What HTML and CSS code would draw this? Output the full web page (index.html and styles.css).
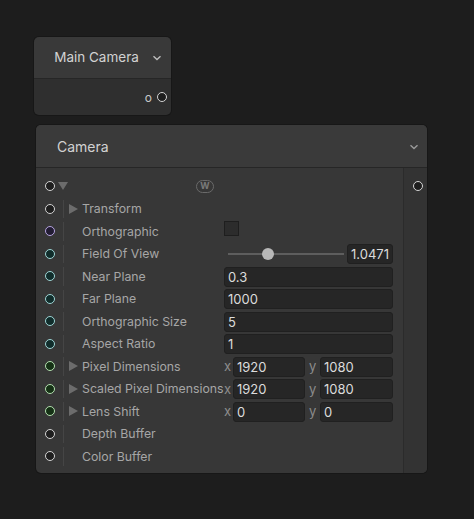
FILE: index.html
```html
<!DOCTYPE html>
<html>
<head>
<meta charset="utf-8">
<link rel="stylesheet" href="styles.css">
</head>
<body>
<div class="canvas">
  <div class="node small">
    <div class="head small-head">
      <span class="title">Main Camera</span>
      <svg class="chev" width="10" height="6" viewBox="0 0 10 6"><path d="M1.5 1.2 L5 4.5 L8.5 1.2" fill="none" stroke="#bdbdbd" stroke-width="1.4"/></svg>
    </div>
    <div class="small-body">
      <span class="o">o</span><span class="port p-white"></span>
    </div>
  </div>

  <div class="node big">
    <div class="head big-head">
      <span class="title">Camera</span>
      <svg class="chev" width="10" height="6" viewBox="0 0 10 6"><path d="M1.5 1.2 L5 4.5 L8.5 1.2" fill="none" stroke="#9a9a9a" stroke-width="1.4"/></svg>
    </div>
    <div class="big-body">
      <div class="inputs">
        <div class="row">
          <span class="port p-white"></span>
          <span class="tri-down"></span>
          <span class="wbadge">W</span>
        </div>
        <div class="row">
          <span class="port p-white"></span><span class="guide"></span><span class="tri"></span>
          <span class="label">Transform</span>
        </div>
        <div class="row">
          <span class="port p-purple"></span><span class="guide"></span>
          <span class="label">Orthographic</span>
          <span class="check"></span>
        </div>
        <div class="row">
          <span class="port p-cyan"></span><span class="guide"></span>
          <span class="label">Field Of View</span>
          <div class="slider"><div class="track"><span class="knob"></span></div><span class="field fov">1.0471</span></div>
        </div>
        <div class="row">
          <span class="port p-cyan"></span><span class="guide"></span>
          <span class="label">Near Plane</span>
          <span class="field wide">0.3</span>
        </div>
        <div class="row">
          <span class="port p-cyan"></span><span class="guide"></span>
          <span class="label">Far Plane</span>
          <span class="field wide">1000</span>
        </div>
        <div class="row">
          <span class="port p-cyan"></span><span class="guide"></span>
          <span class="label">Orthographic Size</span>
          <span class="field wide">5</span>
        </div>
        <div class="row">
          <span class="port p-cyan"></span><span class="guide"></span>
          <span class="label">Aspect Ratio</span>
          <span class="field wide">1</span>
        </div>
        <div class="row">
          <span class="port p-green"></span><span class="guide"></span><span class="tri"></span>
          <span class="label">Pixel Dimensions</span>
          <div class="vec"><span class="ax">x</span><span class="field half">1920</span><span class="ax ay">y</span><span class="field half">1080</span></div>
        </div>
        <div class="row">
          <span class="port p-green"></span><span class="guide"></span><span class="tri"></span>
          <span class="label">Scaled Pixel Dimensions</span>
          <div class="vec"><span class="ax">x</span><span class="field half">1920</span><span class="ax ay">y</span><span class="field half">1080</span></div>
        </div>
        <div class="row">
          <span class="port p-green"></span><span class="guide"></span><span class="tri"></span>
          <span class="label">Lens Shift</span>
          <div class="vec"><span class="ax">x</span><span class="field half">0</span><span class="ax ay">y</span><span class="field half">0</span></div>
        </div>
        <div class="row">
          <span class="port p-white"></span><span class="guide"></span>
          <span class="label">Depth Buffer</span>
        </div>
        <div class="row">
          <span class="port p-white"></span><span class="guide"></span>
          <span class="label">Color Buffer</span>
        </div>
      </div>
      <div class="outputs">
        <span class="port p-white"></span>
      </div>
    </div>
  </div>
</div>
</body>
</html>
```
FILE: styles.css
```css
* { box-sizing: border-box; }
html, body { margin: 0; padding: 0; }
body {
  background: #1d1d1d;
  font-family: Inter, "Noto Sans", sans-serif;
  font-size: 13px;
  color: #c4c4c4;
  width: 474px;
  height: 519px;
  overflow: hidden;
}
.canvas { padding: 37px 0 0 0; }

.node {
  border-radius: 5px;
  overflow: hidden;
  box-shadow: 0 0 0 1px #171717;
}
.head {
  display: flex;
  align-items: center;
  position: relative;
  background: #393939;
  border-bottom: 1px solid #262626;
}
.title { color: #d2d2d2; }
.chev { position: absolute; }

.small { margin-left: 34px; width: 137px; }
.small-head { height: 42px; justify-content: center; padding-right: 12px; padding-bottom: 1px; font-size: 13.5px; }
.small-head .chev { right: 9px; top: 18px; }
.small-body {
  height: 36px;
  background: #2f2f2f;
  display: flex;
  align-items: center;
  justify-content: flex-end;
  padding-right: 4px;
  gap: 5px;
}
.o { color: #c8c8c8; font-size: 12px; line-height: 1; margin-top: 2px; }

.big { margin: 10px 0 0 36px; width: 391px; height: 348px; background: #373737; }
.big-head { height: 43px; padding-left: 21px; font-size: 14px; background: #3a3a3a; }
.big-head .chev { right: 8px; top: 19px; }
.big-body { display: flex; height: 305px; }
.inputs { width: 367px; padding-top: 7px; }
.outputs {
  width: 24px;
  background: #333333;
  border-left: 1px solid #2b2b2b;
  display: flex;
  justify-content: center;
  padding-top: 13px;
  padding-left: 4px;
}

.row {
  height: 22.5px;
  display: flex;
  align-items: center;
  position: relative;
}
.port {
  display: inline-block;
  width: 10px;
  height: 10px;
  border-radius: 50%;
  border: 1.8px solid #cfcfcf;
  background: #1f1f1f;
  flex: none;
}
.row > .port { margin-left: 9px; }
.p-white { border-color: #d4d4d4; background: #1e1e1e; }
.p-purple { border-color: #b6a4e0; background: #221c33; }
.p-cyan { border-color: #9fd6d6; background: #102d2b; }
.p-green { border-color: #b4e0b0; background: #153115; }

.guide {
  position: absolute;
  left: 27px;
  top: 2px;
  bottom: 2px;
  width: 1px;
  background: #454545;
}
.tri {
  position: absolute;
  left: 33px;
  top: 6px;
  width: 0; height: 0;
  border-top: 5px solid transparent;
  border-bottom: 5px solid transparent;
  border-left: 9px solid #6c6c6c;
}
.tri-down {
  position: absolute;
  left: 22px;
  top: 7px;
  width: 0; height: 0;
  border-left: 5px solid transparent;
  border-right: 5px solid transparent;
  border-top: 8px solid #6c6c6c;
}
.wbadge {
  position: absolute;
  left: 160px;
  top: 5px;
  width: 18px;
  height: 13px;
  border: 1.5px solid #6a6a6a;
  border-radius: 7px;
  color: #7a7a7a;
  font-size: 9px;
  font-weight: 700;
  line-height: 10px;
  text-align: center;
}
.label {
  position: absolute;
  left: 46px;
  color: #a6a6a6;
  white-space: nowrap;
  font-size: 12.3px;
}
.field {
  position: absolute;
  height: 20px;
  background: #262626;
  border: 1px solid #202020;
  border-radius: 3px;
  color: #dcdcdc;
  padding-left: 3px;
  line-height: 18px;
  top: 1.5px;
}
.wide { left: 188px; width: 169px; }
.check {
  position: absolute;
  left: 188px;
  top: 1px;
  width: 15px;
  height: 15px;
  background: #2c2c2c;
  border: 1px solid #1e1e1e;
}
.slider { position: absolute; left: 192px; top: 0; width: 165px; height: 22.5px; }
.track {
  position: absolute;
  left: 0;
  top: 10px;
  width: 116px;
  height: 2px;
  background: #5e5e5e;
}
.knob {
  position: absolute;
  left: 34px;
  top: -5px;
  width: 12px;
  height: 12px;
  border-radius: 50%;
  background: #b8b8b8;
}
.fov { left: 119px; width: 46px; top: 1.5px; }
.vec { position: absolute; left: 188px; top: 0; width: 169px; height: 22.5px; }
.vec .field { position: absolute; }
.vec .half:nth-of-type(2) { left: 9px; width: 72px; }
.vec .half:nth-of-type(4) { left: 96px; width: 73px; }
.ax {
  position: absolute;
  left: 0;
  top: 3px;
  color: #8c8c8c;
}
.ay { left: 85px; }
```
